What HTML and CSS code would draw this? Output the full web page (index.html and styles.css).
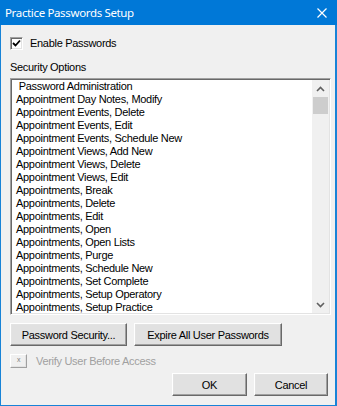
FILE: index.html
```html
<!DOCTYPE html>
<html lang="en">
<head>
    <meta charset="UTF-8">
    <title>Practice Passwords Setup</title>
    <link rel="stylesheet" href="styles.css">
</head>
<body>
    <div class="window">
        <div class="titlebar">
            <span class="title">Practice Passwords Setup</span>
            <svg class="close" width="10" height="10" viewBox="0 0 10 10">
                <path d="M0.5 0.5 L9.5 9.5 M9.5 0.5 L0.5 9.5" stroke="#fff" stroke-width="1.2" fill="none"/>
            </svg>
        </div>

        <div class="content">
            <label class="check">
                <span class="box">
                    <svg width="9" height="9" viewBox="0 0 9 9">
                        <path d="M1 4 L3.5 6.5 L8 1.5" stroke="#000" stroke-width="1.8" fill="none"/>
                    </svg>
                </span>
                Enable Passwords
            </label>

            <div class="group-label">Security Options</div>
            <div class="listbox">
                <ul class="items">
                    <li>&nbsp;Password Administration</li>
                    <li>Appointment Day Notes, Modify</li>
                    <li>Appointment Events, Delete</li>
                    <li>Appointment Events, Edit</li>
                    <li>Appointment Events, Schedule New</li>
                    <li>Appointment Views, Add New</li>
                    <li>Appointment Views, Delete</li>
                    <li>Appointment Views, Edit</li>
                    <li>Appointments, Break</li>
                    <li>Appointments, Delete</li>
                    <li>Appointments, Edit</li>
                    <li>Appointments, Open</li>
                    <li>Appointments, Open Lists</li>
                    <li>Appointments, Purge</li>
                    <li>Appointments, Schedule New</li>
                    <li>Appointments, Set Complete</li>
                    <li>Appointments, Setup Operatory</li>
                    <li>Appointments, Setup Practice</li>
                </ul>
                <div class="scrollbar">
                    <div class="arrow">
                        <svg width="9" height="6" viewBox="0 0 9 6">
                            <path d="M1 5 L4.5 1.5 L8 5" stroke="#606060" stroke-width="1.6" fill="none"/>
                        </svg>
                    </div>
                    <div class="thumb"></div>
                    <div class="track"></div>
                    <div class="arrow">
                        <svg width="9" height="6" viewBox="0 0 9 6">
                            <path d="M1 1 L4.5 4.5 L8 1" stroke="#606060" stroke-width="1.6" fill="none"/>
                        </svg>
                    </div>
                </div>
            </div>

            <div class="actions">
                <button class="btn btn-security">Password Security...</button>
                <button class="btn btn-expire">Expire All User Passwords</button>
            </div>

            <label class="check disabled">
                <span class="box flat"><span class="mark">x</span></span>
                Verify User Before Access
            </label>

            <div class="footer">
                <button class="btn btn-ok">OK</button>
                <button class="btn btn-cancel">Cancel</button>
            </div>
        </div>
    </div>
</body>
</html>
```

FILE: styles.css
```css
body {
    margin: 0;
    background: #f0f0f0;
    font-family: "Liberation Sans", Arial, sans-serif;
    font-size: 11px;
    letter-spacing: -0.3px;
    color: #000;
}
.window {
    width: 337px;
    height: 406px;
    box-sizing: border-box;
    border: 1px solid #1883d7;
    border-top: none;
    border-right-width: 2px;
    background: #f0f0f0;
}
.titlebar {
    height: 25px;
    margin: 0 -2px 0 -1px;
    background: #0078d7;
    color: #fff;
    display: flex;
    align-items: center;
    justify-content: space-between;
    padding: 0 10px 0 5px;
}
.title {
    font-family: "Noto Sans", sans-serif;
    font-size: 11.5px;
    letter-spacing: -0.35px;
}
.close { display: block; }

.content {
    padding: 12px 4px 0 9px;
}
.check {
    display: flex;
    align-items: center;
    height: 13px;
    line-height: 13px;
}
.box {
    width: 13px;
    height: 13px;
    box-sizing: border-box;
    margin-right: 7px;
    background: #fff;
    border: 1px solid;
    border-color: #a0a0a0 #fff #fff #a0a0a0;
    box-shadow: inset 1px 1px 0 #696969, inset -1px -1px 0 #e3e3e3;
    display: flex;
    align-items: center;
    justify-content: center;
}
.group-label {
    margin-top: 11px;
    line-height: 13px;
}
.listbox {
    margin-top: 4px;
    height: 237px;
    width: 321px;
    box-sizing: border-box;
    border: 1px solid;
    border-color: #a0a0a0 #fff #fff #a0a0a0;
    box-shadow: inset 1px 1px 0 #696969, inset -1px -1px 0 #e3e3e3;
    background: #fff;
    display: flex;
    overflow: hidden;
}
.items {
    list-style: none;
    margin: 1px 0 0 1px;
    padding: 0 0 0 4px;
    flex: 1;
    line-height: 13px;
    white-space: nowrap;
}
.scrollbar {
    width: 17px;
    margin: 1px 1px 1px 0;
    background: #f0f0f0;
    display: flex;
    flex-direction: column;
}
.arrow {
    height: 17px;
    display: flex;
    align-items: center;
    justify-content: center;
}
.thumb {
    height: 17px;
    margin: 0 1px;
    background: #cdcdcd;
}
.track { flex: 1; }

.btn {
    height: 23px;
    box-sizing: border-box;
    background: #e1e1e1;
    border: 1px solid;
    border-color: #fff #696969 #696969 #fff;
    box-shadow: inset -1px -1px 0 #a0a0a0, inset 1px 1px 0 #e3e3e3;
    font-family: inherit;
    font-size: 11px;
    letter-spacing: -0.3px;
    color: #000;
    padding: 0;
}
.actions {
    display: flex;
    gap: 7px;
    margin-top: 8px;
}
.btn-security { width: 117px; }
.btn-expire { width: 148px; }

.check.disabled {
    margin-top: 8px;
    height: 14px;
    color: #a0a0a0;
}
.box.flat {
    width: 17px;
    height: 14px;
    margin-right: 9px;
    background: #f0f0f0;
    border-color: #fff #a0a0a0 #a0a0a0 #fff;
    box-shadow: inset -1px -1px 0 #e3e3e3;
}
.mark {
    font-size: 7px;
    line-height: 7px;
    color: #808080;
    margin-top: -4px;
}
.footer {
    display: flex;
    justify-content: flex-end;
    gap: 7px;
    margin-top: 5px;
    padding-right: 3px;
}
.btn-ok { width: 75px; }
.btn-cancel { width: 74px; }
```
